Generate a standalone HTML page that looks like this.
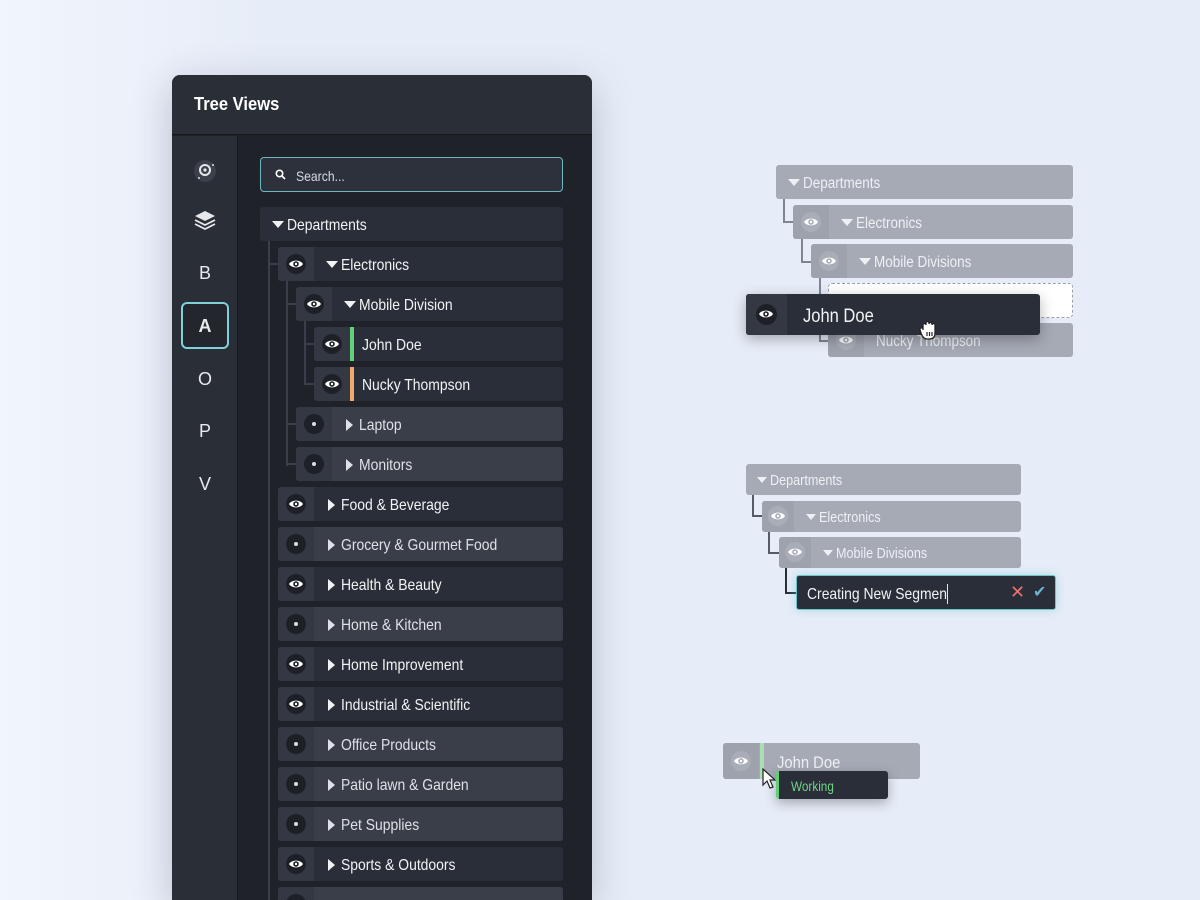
<!DOCTYPE html>
<html><head><meta charset="utf-8"><style>
*{margin:0;padding:0;box-sizing:border-box}
html,body{width:1200px;height:900px;overflow:hidden}
body{background:#e7edf8;font-family:"Liberation Sans Narrow","Liberation Sans",sans-serif;position:relative}
.glow{position:absolute;left:0;top:0;width:260px;height:900px;background:linear-gradient(90deg,#f1f5fc,#e7edf8)}
.abs{position:absolute}
.t{display:inline-block;transform:scaleX(.87);transform-origin:left center;white-space:nowrap;position:relative;top:2px}
.panel{left:172px;top:75px;width:420px;height:825px;background:#1f2228;border-radius:8px 8px 0 0;overflow:hidden;box-shadow:0 10px 40px rgba(40,50,80,.25)}
.hdr{left:0;top:0;width:420px;height:60px;background:#2a2e37;border-bottom:1px solid #15171b;color:#fff;font-weight:bold;font-size:18px;padding:19px 22px}
.side{left:0;top:61px;width:66px;height:800px;background:#2a2e37;border-right:1px solid #17191d}
.sl{position:absolute;left:0;width:66px;text-align:center;color:#e8eaee;font-size:18px}
.row{position:absolute;height:34px;border-radius:3px;background:#2a2e38;color:#f2f3f5;font-size:16px;line-height:34px;white-space:nowrap}
.row.l{background:#3a3e48;color:#dfe1e6}
.ic{position:absolute;left:0;top:0;width:36px;height:34px;background:#333843;border-radius:3px 0 0 3px}
.eye{position:absolute;left:8px;top:7px;width:20px;height:20px;border-radius:50%;background:#1d2026}
.eye svg{position:absolute;left:2px;top:4px}
.dot{position:absolute;left:8px;top:7px;width:20px;height:20px;border-radius:50%;background:#1d2026}
.dot:after{content:"";position:absolute;left:8px;top:8px;width:4px;height:4px;border-radius:50%;background:#ddd}
.tri-d{display:inline-block;width:0;height:0;border-left:6px solid transparent;border-right:6px solid transparent;border-top:7px solid currentColor;margin-right:3px;vertical-align:0px}
.tri-r{display:inline-block;width:0;height:0;border-top:6px solid transparent;border-bottom:6px solid transparent;border-left:7px solid currentColor;margin-right:6px;vertical-align:-3px}
.ln{position:absolute;background:#3a404b}
.g{position:absolute;height:34px;border-radius:3px;background:#a6aab5;color:#eef0f4;font-size:15.5px;line-height:34px;white-space:nowrap}
.g .ic{background:#9ea2ad}
.g .eye,.g .dot{background:#a9adb8}
.gl{position:absolute;background:#80858f}
</style></head><body>
<div class="glow"></div>
<div class="abs panel">
 <div class="abs hdr"><span class="t" style="transform:scaleX(.92);top:0">Tree Views</span></div>
 <div class="abs side">
  <svg class="abs" style="left:20px;top:22px" width="26" height="26" viewBox="0 0 26 26"><circle cx="13" cy="13" r="11" fill="#3b404a"/><circle cx="13" cy="12" r="5" fill="none" stroke="#e6e8ec" stroke-width="2"/><circle cx="13" cy="12" r="1.6" fill="#e6e8ec"/><circle cx="21" cy="7" r="1" fill="#ddd"/><circle cx="7" cy="20" r="1" fill="#ddd"/></svg>
  <svg class="abs" style="left:22px;top:73px" width="22" height="22" viewBox="0 0 22 22"><path d="M11 2L21 7 11 12 1 7Z" fill="#e6e8ec"/><path d="M1 11l10 5 10-5M1 15l10 5 10-5" fill="none" stroke="#e6e8ec" stroke-width="1.8"/></svg>
  <div class="sl" style="top:127px">B</div>
  <div class="abs" style="left:9px;top:166px;width:48px;height:47px;border:2px solid #7fd0d8;border-radius:6px;background:#23262d"></div>
  <div class="sl" style="top:180px;font-weight:bold">A</div>
  <div class="sl" style="top:233px">O</div>
  <div class="sl" style="top:285px">P</div>
  <div class="sl" style="top:338px">V</div>
 </div>
 <div class="abs" style="left:88px;top:82px;width:303px;height:35px;border:1px solid #6fb7bf;border-radius:4px;background:#2c313b;color:#d8dbe0;font-size:14px;line-height:33px;padding-left:35px"><span class="t">Search...</span>
  <svg class="abs" style="left:14px;top:11px" width="11" height="11" viewBox="0 0 11 11"><circle cx="4.5" cy="4.5" r="3.2" fill="none" stroke="#fff" stroke-width="1.6"/><path d="M7 7l3 3" stroke="#fff" stroke-width="1.8"/></svg></div>
</div>
<div class="ln" style="left:268px;top:241px;width:2px;height:659px"></div>
<div class="ln" style="left:286px;top:281px;width:2px;height:185px"></div>
<div class="ln" style="left:304px;top:321px;width:2px;height:64px"></div>
<div class="ln" style="left:268px;top:263px;width:10px;height:2px"></div>
<div class="ln" style="left:286px;top:303px;width:10px;height:2px"></div>
<div class="ln" style="left:286px;top:423px;width:10px;height:2px"></div>
<div class="ln" style="left:286px;top:463px;width:10px;height:2px"></div>
<div class="ln" style="left:304px;top:343px;width:10px;height:2px"></div>
<div class="ln" style="left:304px;top:383px;width:10px;height:2px"></div>

<div class="row" style="left:260px;top:207px;width:303px;padding-left:12px"><span class="tri-d"></span><span class="t">Departments</span></div>

<div id="rows"></div>
<script>
const E='<svg width="16" height="12" viewBox="0 0 16 12"><path d="M1 6C3.5 1.5 12.5 1.5 15 6 12.5 10.5 3.5 10.5 1 6Z" fill="#fff"/><circle cx="8" cy="6" r="2.8" fill="#1d2026"/><circle cx="8" cy="6" r="1.2" fill="#fff"/></svg>';
const rows=[
[278,247,'Electronics','e','d',0],
[296,287,'Mobile Division','e','d',0],
[314,327,'John Doe','e','',"#62d27a"],
[314,367,'Nucky Thompson','e','',"#f0a96a"],
[296,407,'Laptop','d','r',0],
[296,447,'Monitors','d','r',0],
[278,487,'Food & Beverage','e','r',0],
[278,527,'Grocery & Gourmet Food','d','r',0],
[278,567,'Health & Beauty','e','r',0],
[278,607,'Home & Kitchen','d','r',0],
[278,647,'Home Improvement','e','r',0],
[278,687,'Industrial & Scientific','e','r',0],
[278,727,'Office Products','d','r',0],
[278,767,'Patio lawn & Garden','d','r',0],
[278,807,'Pet Supplies','d','r',0],
[278,847,'Sports & Outdoors','e','r',0],
[278,887,'','d','',0]];
let h='';
for(const [x,y,t,ic,tr,bar] of rows){
 const l=ic=='d';
 h+=`<div class="row${l?' l':''}" style="left:${x}px;top:${y}px;width:${563-x}px;padding-left:${bar?48:(tr=='d'?48:50)}px">`+
 `<div class="ic">${l?'<div class="dot"></div>':'<div class="eye">'+E+'</div>'}</div>`+
 (bar?`<div style="position:absolute;left:36px;top:0;width:4px;height:34px;background:${bar}"></div>`:'')+
 (tr=='d'?'<span class="tri-d"></span>':tr=='r'?'<span class="tri-r"></span>':'')+'<span class="t">'+t+'</span></div>';
}
document.getElementById('rows').innerHTML=h;
</script>

<div class="gl" style="left:783px;top:199px;width:2px;height:24px"></div><div class="gl" style="left:783px;top:221px;width:10px;height:2px"></div>
<div class="gl" style="left:801px;top:239px;width:2px;height:24px"></div><div class="gl" style="left:801px;top:261px;width:10px;height:2px"></div>
<div class="gl" style="left:819px;top:278px;width:2px;height:64px"></div><div class="gl" style="left:819px;top:340px;width:10px;height:2px"></div>
<div class="g" style="left:776px;top:165px;width:297px;padding-left:12px"><span class="tri-d"></span><span class="t">Departments</span></div>
<div class="g" style="left:793px;top:205px;width:280px;padding-left:48px"><div class="ic"><div class="eye"></div></div><span class="tri-d"></span><span class="t">Electronics</span></div>
<div class="g" style="left:811px;top:244px;width:262px;padding-left:48px"><div class="ic"><div class="eye"></div></div><span class="tri-d"></span><span class="t">Mobile Divisions</span></div>
<div class="abs" style="left:828px;top:283px;width:245px;height:35px;border:1.5px dashed #9aa0aa;border-radius:4px;background:#fff"></div>
<div class="g" style="left:828px;top:323px;width:245px;padding-left:48px"><div class="ic"><div class="eye"></div></div><span class="t">Nucky Thompson</span></div>
<div class="row" style="left:746px;top:294px;width:294px;height:41px;line-height:41px;font-size:19px;padding-left:57px;box-shadow:0 4px 14px rgba(0,0,0,.3)"><div class="ic" style="width:41px;height:41px"><div class="eye" style="left:10px;top:10px;width:21px;height:21px"></div></div><span class="t">John Doe</span></div>
<svg class="abs" style="left:918px;top:320px" width="22" height="22" viewBox="0 0 22 22"><path d="M5 10V5a1.5 1.5 0 013 0V3a1.5 1.5 0 013 0v1a1.5 1.5 0 013 0v1a1.5 1.5 0 013 0v8c0 4-2 6-6 6h-2c-3 0-5-3-6-6l-1-3a1.5 1.5 0 013-1z" fill="#fff" stroke="#222" stroke-width="1.3"/><path d="M9 12v4M11.5 12v4M14 12v4" stroke="#222" stroke-width="1.2"/></svg>

<div class="abs" style="left:752px;top:495px;width:2px;height:22px;background:#555a63"></div><div class="abs" style="left:752px;top:515px;width:10px;height:2px;background:#555a63"></div>
<div class="abs" style="left:768px;top:532px;width:2px;height:22px;background:#555a63"></div><div class="abs" style="left:768px;top:552px;width:11px;height:2px;background:#555a63"></div>
<div class="abs" style="left:785px;top:568px;width:2px;height:26px;background:#2a2e37"></div><div class="abs" style="left:785px;top:592px;width:11px;height:2px;background:#2a2e37"></div>
<div class="g" style="left:746px;top:464px;width:275px;height:31px;line-height:31px;font-size:14.5px;padding-left:11px"><span class="tri-d" style="border-width:6px 5px 0"></span><span class="t">Departments</span></div>
<div class="g" style="left:762px;top:501px;width:259px;height:31px;line-height:31px;font-size:14.5px;padding-left:44px"><div class="ic" style="width:32px;height:31px"><div class="eye" style="left:6px;top:5px"></div></div><span class="tri-d" style="border-width:6px 5px 0"></span><span class="t">Electronics</span></div>
<div class="g" style="left:779px;top:537px;width:242px;height:31px;line-height:31px;font-size:14.5px;padding-left:44px"><div class="ic" style="width:32px;height:31px"><div class="eye" style="left:6px;top:5px"></div></div><span class="tri-d" style="border-width:6px 5px 0"></span><span class="t">Mobile Divisions</span></div>
<div class="row" style="left:796px;top:575px;width:260px;height:35px;line-height:33px;padding-left:10px;font-size:16px;border:1px solid #6fc3cc;box-shadow:0 0 10px rgba(110,200,210,.5)"><span class="t">Creating New Segmen<span style="display:inline-block;width:1px;height:20px;background:#fff;vertical-align:-5px"></span></span>
<span style="position:absolute;left:213px;top:0;color:#f0706f;font-size:18px">✕</span><span style="position:absolute;left:236px;top:0;color:#6cb1d6;font-size:16px">✔</span></div>

<div class="g" style="left:723px;top:743px;width:197px;height:36px;line-height:36px;font-size:17px;padding-left:54px"><div class="ic" style="height:36px"><div class="eye" style="top:8px"></div></div><div style="position:absolute;left:37px;top:0;width:4px;height:36px;background:#a8e0b4"></div><span class="t">John Doe</span></div>
<div class="row" style="left:776px;top:771px;width:112px;height:28px;line-height:28px;font-size:13.5px;color:#6fd586;padding-left:12px;border-left:3px solid #5fd078;box-shadow:0 4px 12px rgba(0,0,0,.3)"><span class="t">Working</span></div>
<svg class="abs" style="left:762px;top:768px" width="14" height="22" viewBox="0 0 14 22"><path d="M1 1v16l4-4 3 7 3-1-3-7h5z" fill="#fff" stroke="#222" stroke-width="1.2"/></svg>
<script>
document.querySelectorAll('.g .eye').forEach(e=>e.innerHTML=E.split('#1d2026').join('#a9adb8'));
document.querySelectorAll('.row > .ic .eye').forEach(e=>{if(!e.innerHTML)e.innerHTML=E});
</script>
</body></html>
